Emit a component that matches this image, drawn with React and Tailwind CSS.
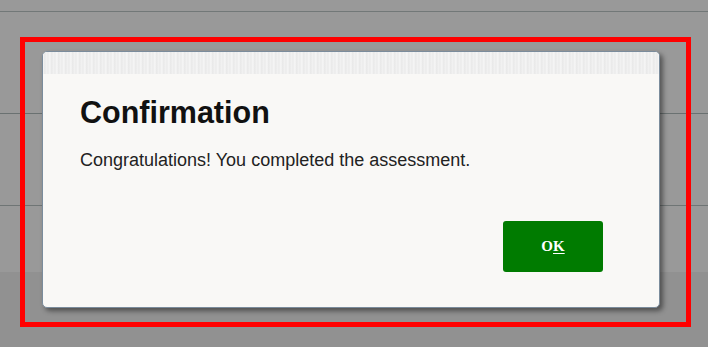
import React from "react";

export default function App() {
  return (
    <div
      className="relative w-[708px] h-[347px] overflow-hidden bg-[#999999]"
      style={{ fontFamily: '"Liberation Sans", Arial, sans-serif' }}
    >
      {/* page behind the modal */}
      <div className="flex flex-col h-full">
        <div className="h-[12px] border-b border-[#727878]" />
        <div className="h-[102px] border-b border-[#6a7171]" />
        <div className="h-[92px] border-b border-[#6f7575]" />
        <div className="h-[66px]" />
        <div className="flex-1 bg-[#919191]" />
      </div>

      {/* highlight frame + dialog */}
      <div className="absolute left-[20px] top-[37px] w-[671px] h-[290px] border-[5px] border-[#ff0000] pl-[17px] pt-[9px]">
        <div className="w-[618px] h-[257px] flex flex-col bg-[#f9f8f6] border border-[#7b8c9c] rounded-[5px] shadow-[3px_3px_5px_rgba(0,0,0,0.45)] overflow-hidden">
          <div className="h-[22px] shrink-0 bg-[repeating-linear-gradient(90deg,#f5f5f5_0px,#e6e6e6_2px,#f3f3f3_3px,#ebebeb_5px,#f7f7f7_7px)]" />
          <div className="flex-1 flex flex-col pl-[37px] pr-[56px]">
            <h1 className="mt-[20px] text-[30.5px] leading-[36px] font-bold text-[#111111]">
              Confirmation
            </h1>
            <p className="mt-[18px] text-[18px] leading-[24px] text-[#222222]">
              Congratulations! You completed the assessment.
            </p>
            <div className="flex justify-end mt-[49px]">
              <button
                className="w-[100px] h-[51px] rounded-[3px] bg-[#007b00] text-white text-[15px] font-bold flex items-center justify-center"
                style={{ fontFamily: '"Liberation Serif", "Times New Roman", serif' }}
              >
                O<span className="underline underline-offset-2">K</span>
              </button>
            </div>
          </div>
        </div>
      </div>
    </div>
  );
}
